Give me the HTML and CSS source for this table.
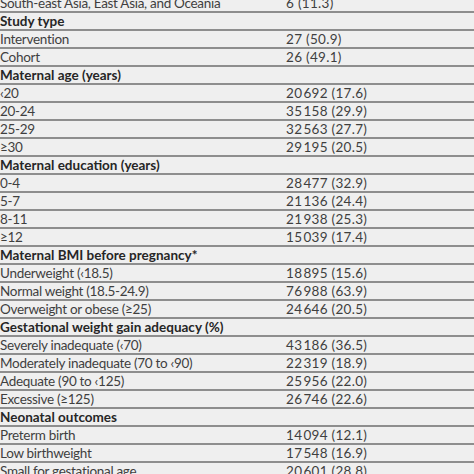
FILE: index.html
```html
<!DOCTYPE html>
<html>
<head>
<meta charset="utf-8">
<link rel="stylesheet" href="styles.css">
</head>
<body>
<div class="table">
  <div class="row"><div class="label">South-east Asia, East Asia, and Oceania</div><div class="value">6 (11.3)</div></div>
  <div class="row head"><div class="label">Study type</div><div class="value"></div></div>
  <div class="row"><div class="label">Intervention</div><div class="value">27 (50.9)</div></div>
  <div class="row"><div class="label">Cohort</div><div class="value">26 (49.1)</div></div>
  <div class="row head"><div class="label">Maternal age (years)</div><div class="value"></div></div>
  <div class="row"><div class="label">‹20</div><div class="value">20&#8202;692 (17.6)</div></div>
  <div class="row"><div class="label">20-24</div><div class="value">35&#8202;158 (29.9)</div></div>
  <div class="row"><div class="label">25-29</div><div class="value">32&#8202;563 (27.7)</div></div>
  <div class="row"><div class="label">≥30</div><div class="value">29&#8202;195 (20.5)</div></div>
  <div class="row head"><div class="label">Maternal education (years)</div><div class="value"></div></div>
  <div class="row"><div class="label">0-4</div><div class="value">28&#8202;477 (32.9)</div></div>
  <div class="row"><div class="label">5-7</div><div class="value">21&#8202;136 (24.4)</div></div>
  <div class="row"><div class="label">8-11</div><div class="value">21&#8202;938 (25.3)</div></div>
  <div class="row"><div class="label">≥12</div><div class="value">15&#8202;039 (17.4)</div></div>
  <div class="row head"><div class="label">Maternal BMI before pregnancy*</div><div class="value"></div></div>
  <div class="row"><div class="label">Underweight (‹18.5)</div><div class="value">18&#8202;895 (15.6)</div></div>
  <div class="row"><div class="label">Normal weight (18.5-24.9)</div><div class="value">76&#8202;988 (63.9)</div></div>
  <div class="row"><div class="label">Overweight or obese (≥25)</div><div class="value">24&#8202;646 (20.5)</div></div>
  <div class="row head"><div class="label">Gestational weight gain adequacy (%)</div><div class="value"></div></div>
  <div class="row"><div class="label">Severely inadequate (‹70)</div><div class="value">43&#8202;186 (36.5)</div></div>
  <div class="row"><div class="label">Moderately inadequate (70 to ‹90)</div><div class="value">22&#8202;319 (18.9)</div></div>
  <div class="row"><div class="label">Adequate (90 to ‹125)</div><div class="value">25&#8202;956 (22.0)</div></div>
  <div class="row"><div class="label">Excessive (≥125)</div><div class="value">26&#8202;746 (22.6)</div></div>
  <div class="row head"><div class="label">Neonatal outcomes</div><div class="value"></div></div>
  <div class="row"><div class="label">Preterm birth</div><div class="value">14&#8202;094 (12.1)</div></div>
  <div class="row"><div class="label">Low birthweight</div><div class="value">17&#8202;548 (16.9)</div></div>
  <div class="row"><div class="label">Small for gestational age</div><div class="value">20&#8202;601 (28.8)</div></div>
</div>
</body>
</html>
```
FILE: styles.css
```css
html, body {
  margin: 0;
  padding: 0;
  background: #efefef;
  overflow: hidden;
}
.table {
  margin-top: -7px;
  font-family: Lato, "Noto Sans", sans-serif;
  font-size: 13.5px;
  color: #3f3f3f;
}
.row {
  display: grid;
  grid-template-columns: 286px 1fr;
  height: 16px;
  line-height: 16px;
  border-top: 2px solid #8e8e8e;
  background: #efefef;
  white-space: nowrap;
}
.label {
  padding-left: 0;
  letter-spacing: -0.3px;
}
.value {
  letter-spacing: 0.3px;
}
.head .label {
  font-weight: 700;
  letter-spacing: 0;
  color: #262626;
}
```
